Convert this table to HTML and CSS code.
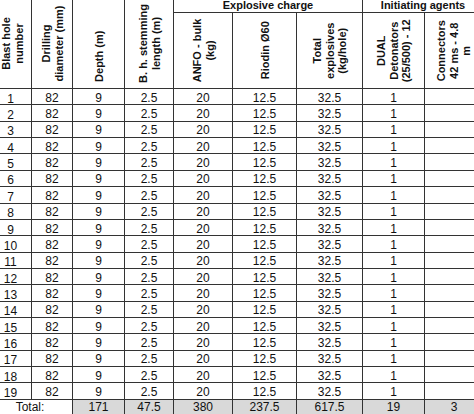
FILE: index.html
```html
<!DOCTYPE html>
<html lang="en">
<head>
<meta charset="utf-8">
<title>Blast holes</title>
<link rel="stylesheet" href="styles.css">
</head>
<body>
<div class="sheet">
  <div class="hd span2 first"><span class="rot">Blast hole<br>number</span></div>
  <div class="hd span2"><span class="rot">Drilling<br>diameter (mm)</span></div>
  <div class="hd span2 depth"><span class="rot">Depth (m)</span></div>
  <div class="hd span2"><span class="rot">B. h. stemming<br>length (m)</span></div>
  <div class="grp grp-exp">Explosive charge</div>
  <div class="grp grp-init">Initiating agents</div>
  <div class="hd"><span class="rot">ANFO - bulk<br>(kg)</span></div>
  <div class="hd"><span class="rot">Riodin Ø60</span></div>
  <div class="hd"><span class="rot">Total<br>explosives<br>(kg/hole)</span></div>
  <div class="hd"><span class="rot">DUAL<br>Detonators<br>(25/500) - 12</span></div>
  <div class="hd"><span class="rot">Connectors<br>42 ms - 4.8<br>m</span></div>

  <div class="c n">1</div><div class="c">82</div><div class="c">9</div><div class="c">2.5</div><div class="c">20</div><div class="c">12.5</div><div class="c">32.5</div><div class="c">1</div><div class="c"></div>
  <div class="c n">2</div><div class="c">82</div><div class="c">9</div><div class="c">2.5</div><div class="c">20</div><div class="c">12.5</div><div class="c">32.5</div><div class="c">1</div><div class="c"></div>
  <div class="c n">3</div><div class="c">82</div><div class="c">9</div><div class="c">2.5</div><div class="c">20</div><div class="c">12.5</div><div class="c">32.5</div><div class="c">1</div><div class="c"></div>
  <div class="c n">4</div><div class="c">82</div><div class="c">9</div><div class="c">2.5</div><div class="c">20</div><div class="c">12.5</div><div class="c">32.5</div><div class="c">1</div><div class="c"></div>
  <div class="c n">5</div><div class="c">82</div><div class="c">9</div><div class="c">2.5</div><div class="c">20</div><div class="c">12.5</div><div class="c">32.5</div><div class="c">1</div><div class="c"></div>
  <div class="c n">6</div><div class="c">82</div><div class="c">9</div><div class="c">2.5</div><div class="c">20</div><div class="c">12.5</div><div class="c">32.5</div><div class="c">1</div><div class="c"></div>
  <div class="c n">7</div><div class="c">82</div><div class="c">9</div><div class="c">2.5</div><div class="c">20</div><div class="c">12.5</div><div class="c">32.5</div><div class="c">1</div><div class="c"></div>
  <div class="c n">8</div><div class="c">82</div><div class="c">9</div><div class="c">2.5</div><div class="c">20</div><div class="c">12.5</div><div class="c">32.5</div><div class="c">1</div><div class="c"></div>
  <div class="c n">9</div><div class="c">82</div><div class="c">9</div><div class="c">2.5</div><div class="c">20</div><div class="c">12.5</div><div class="c">32.5</div><div class="c">1</div><div class="c"></div>
  <div class="c n">10</div><div class="c">82</div><div class="c">9</div><div class="c">2.5</div><div class="c">20</div><div class="c">12.5</div><div class="c">32.5</div><div class="c">1</div><div class="c"></div>
  <div class="c n">11</div><div class="c">82</div><div class="c">9</div><div class="c">2.5</div><div class="c">20</div><div class="c">12.5</div><div class="c">32.5</div><div class="c">1</div><div class="c"></div>
  <div class="c n">12</div><div class="c">82</div><div class="c">9</div><div class="c">2.5</div><div class="c">20</div><div class="c">12.5</div><div class="c">32.5</div><div class="c">1</div><div class="c"></div>
  <div class="c n">13</div><div class="c">82</div><div class="c">9</div><div class="c">2.5</div><div class="c">20</div><div class="c">12.5</div><div class="c">32.5</div><div class="c">1</div><div class="c"></div>
  <div class="c n">14</div><div class="c">82</div><div class="c">9</div><div class="c">2.5</div><div class="c">20</div><div class="c">12.5</div><div class="c">32.5</div><div class="c">1</div><div class="c"></div>
  <div class="c n">15</div><div class="c">82</div><div class="c">9</div><div class="c">2.5</div><div class="c">20</div><div class="c">12.5</div><div class="c">32.5</div><div class="c">1</div><div class="c"></div>
  <div class="c n">16</div><div class="c">82</div><div class="c">9</div><div class="c">2.5</div><div class="c">20</div><div class="c">12.5</div><div class="c">32.5</div><div class="c">1</div><div class="c"></div>
  <div class="c n">17</div><div class="c">82</div><div class="c">9</div><div class="c">2.5</div><div class="c">20</div><div class="c">12.5</div><div class="c">32.5</div><div class="c">1</div><div class="c"></div>
  <div class="c n">18</div><div class="c">82</div><div class="c">9</div><div class="c">2.5</div><div class="c">20</div><div class="c">12.5</div><div class="c">32.5</div><div class="c">1</div><div class="c"></div>
  <div class="c n">19</div><div class="c">82</div><div class="c">9</div><div class="c">2.5</div><div class="c">20</div><div class="c">12.5</div><div class="c">32.5</div><div class="c">1</div><div class="c"></div>

  <div class="c total-label">Total:</div>
  <div class="c tot">171</div><div class="c tot">47.5</div><div class="c tot">380</div><div class="c tot">237.5</div><div class="c tot">617.5</div><div class="c tot">19</div><div class="c tot">3</div>
</div>
</body>
</html>
```

FILE: styles.css
```css
html, body {
  margin: 0;
  padding: 0;
  background: #fff;
  overflow: hidden;
}

body {
  width: 474px;
  height: 414px;
  font-family: "Liberation Sans", Arial, sans-serif;
  color: #111;
}

.sheet {
  display: grid;
  grid-template-columns: 44px 41px 52px 49px 59px 64px 66px 62px 59px;
  grid-template-rows: 15px 76px repeat(19, 16.368px) 16px;
  margin: -2px 0 0 -12px;
  width: 496px;
}

.sheet > div {
  box-sizing: border-box;
  border-right: 1px solid #333;
  border-bottom: 1px solid #333;
}

.hd {
  display: flex;
  align-items: center;
  justify-content: center;
  font-size: 11px;
  font-weight: bold;
  overflow: visible;
}

.span2 {
  grid-row: 1 / 3;
}

.first {
  padding-left: 4px;
}

.depth {
  padding-top: 26px;
}

.rot {
  display: block;
  flex: none;
  width: 100px;
  text-align: center;
  line-height: 12.5px;
  white-space: nowrap;
  transform: rotate(-90deg);
}

.grp {
  display: flex;
  align-items: center;
  justify-content: center;
  font-size: 11px;
  font-weight: bold;
  white-space: nowrap;
  line-height: 13px;
  padding-top: 1px;
}

.grp-exp {
  grid-column: 5 / 8;
}

.grp-init {
  grid-column: 8 / 10;
}

.c {
  display: flex;
  align-items: center;
  justify-content: center;
  font-size: 12px;
  line-height: 14px;
  padding-top: 2px;
}

.c.n {
  padding-top: 4px;
  padding-left: 2px;
}

.total-label {
  grid-column: 1 / 3;
  border-bottom: none !important;
  align-items: flex-start !important;
  padding-top: 0 !important;
}

.tot {
  background: #d9d9d9;
  border-bottom: none !important;
  align-items: flex-start !important;
  padding-top: 0 !important;
}
```
